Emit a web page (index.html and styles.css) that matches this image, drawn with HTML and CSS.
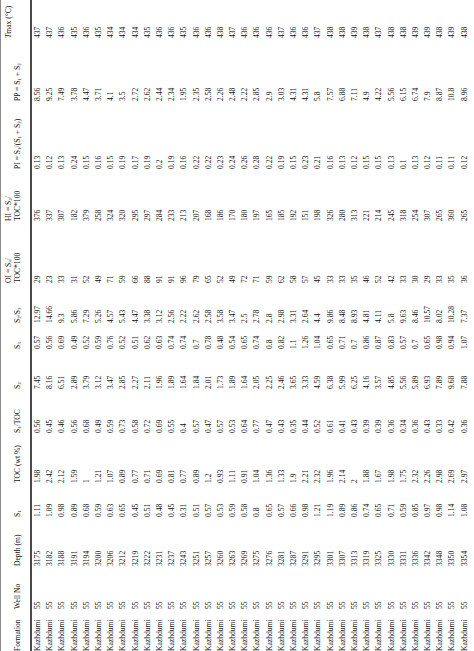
FILE: index.html
```html
<!DOCTYPE html>
<html>
<head>
<meta charset="utf-8">
<link rel="stylesheet" href="styles.css">
</head>
<body>
<div class="page">
<div class="rotator">
<table class="data">
<colgroup>
<col class="c-form"><col class="c-well"><col class="c-depth"><col class="c-s1"><col class="c-toc"><col class="c-s1toc"><col class="c-s2"><col class="c-s3"><col class="c-s2s3"><col class="c-oi"><col class="c-hi"><col class="c-pi"><col class="c-pp"><col class="c-tmax">
</colgroup>
<thead>
<tr>
<th>Formation</th>
<th>Well No</th>
<th>Depth (m)</th>
<th>S<sub>1</sub></th>
<th>TOC (wt %)</th>
<th>S<sub>1</sub>/TOC</th>
<th>S<sub>2</sub></th>
<th>S<sub>3</sub></th>
<th>S<sub>2</sub>/S<sub>3</sub></th>
<th>OI = S<sub>3</sub>/<br>TOC*100</th>
<th>HI = S<sub>2</sub>/<br>TOC*100</th>
<th>PI = S<sub>1</sub>/(S<sub>1</sub> + S<sub>2</sub>)</th>
<th>PP = S<sub>1</sub> + S<sub>2</sub></th>
<th class="top"><i>T</i>max (°C)</th>
</tr>
</thead>
<tbody>
<tr><td>Kazhdumi</td><td>55</td><td>3175</td><td>1.11</td><td>1.98</td><td>0.56</td><td>7.45</td><td>0.57</td><td>12.97</td><td>29</td><td>376</td><td>0.13</td><td>8.56</td><td>437</td></tr>
<tr><td>Kazhdumi</td><td>55</td><td>3182</td><td>1.09</td><td>2.42</td><td>0.45</td><td>8.16</td><td>0.56</td><td>14.66</td><td>23</td><td>337</td><td>0.12</td><td>9.25</td><td>437</td></tr>
<tr><td>Kazhdumi</td><td>55</td><td>3188</td><td>0.98</td><td>2.12</td><td>0.46</td><td>6.51</td><td>0.69</td><td>9.3</td><td>33</td><td>307</td><td>0.13</td><td>7.49</td><td>436</td></tr>
<tr><td>Kazhdumi</td><td>55</td><td>3191</td><td>0.89</td><td>1.59</td><td>0.56</td><td>2.89</td><td>0.49</td><td>5.86</td><td>31</td><td>182</td><td>0.24</td><td>3.78</td><td>435</td></tr>
<tr><td>Kazhdumi</td><td>55</td><td>3194</td><td>0.68</td><td>1</td><td>0.68</td><td>3.79</td><td>0.52</td><td>7.29</td><td>52</td><td>379</td><td>0.15</td><td>4.47</td><td>436</td></tr>
<tr><td>Kazhdumi</td><td>55</td><td>3200</td><td>0.59</td><td>1.21</td><td>0.49</td><td>3.12</td><td>0.59</td><td>5.26</td><td>49</td><td>258</td><td>0.16</td><td>3.71</td><td>435</td></tr>
<tr><td>Kazhdumi</td><td>55</td><td>3206</td><td>0.63</td><td>1.07</td><td>0.59</td><td>3.47</td><td>0.76</td><td>4.57</td><td>71</td><td>324</td><td>0.15</td><td>4.1</td><td>434</td></tr>
<tr><td>Kazhdumi</td><td>55</td><td>3212</td><td>0.65</td><td>0.89</td><td>0.73</td><td>2.85</td><td>0.52</td><td>5.43</td><td>59</td><td>320</td><td>0.19</td><td>3.5</td><td>434</td></tr>
<tr><td>Kazhdumi</td><td>55</td><td>3219</td><td>0.45</td><td>0.77</td><td>0.58</td><td>2.27</td><td>0.51</td><td>4.47</td><td>66</td><td>295</td><td>0.17</td><td>2.72</td><td>434</td></tr>
<tr><td>Kazhdumi</td><td>55</td><td>3222</td><td>0.51</td><td>0.71</td><td>0.72</td><td>2.11</td><td>0.62</td><td>3.38</td><td>88</td><td>297</td><td>0.19</td><td>2.62</td><td>435</td></tr>
<tr><td>Kazhdumi</td><td>55</td><td>3231</td><td>0.48</td><td>0.69</td><td>0.69</td><td>1.96</td><td>0.63</td><td>3.12</td><td>91</td><td>284</td><td>0.2</td><td>2.44</td><td>436</td></tr>
<tr><td>Kazhdumi</td><td>55</td><td>3237</td><td>0.45</td><td>0.81</td><td>0.55</td><td>1.89</td><td>0.74</td><td>2.56</td><td>91</td><td>233</td><td>0.19</td><td>2.34</td><td>436</td></tr>
<tr><td>Kazhdumi</td><td>55</td><td>3243</td><td>0.31</td><td>0.77</td><td>0.4</td><td>1.64</td><td>0.74</td><td>2.22</td><td>96</td><td>213</td><td>0.16</td><td>1.95</td><td>435</td></tr>
<tr><td>Kazhdumi</td><td>55</td><td>3251</td><td>0.51</td><td>0.89</td><td>0.57</td><td>1.84</td><td>0.7</td><td>2.62</td><td>79</td><td>207</td><td>0.22</td><td>2.35</td><td>436</td></tr>
<tr><td>Kazhdumi</td><td>55</td><td>3257</td><td>0.57</td><td>1.2</td><td>0.47</td><td>2.01</td><td>0.78</td><td>2.58</td><td>65</td><td>168</td><td>0.22</td><td>2.58</td><td>436</td></tr>
<tr><td>Kazhdumi</td><td>55</td><td>3260</td><td>0.53</td><td>0.93</td><td>0.57</td><td>1.73</td><td>0.48</td><td>3.58</td><td>52</td><td>186</td><td>0.23</td><td>2.26</td><td>438</td></tr>
<tr><td>Kazhdumi</td><td>55</td><td>3263</td><td>0.59</td><td>1.11</td><td>0.53</td><td>1.89</td><td>0.54</td><td>3.47</td><td>49</td><td>170</td><td>0.24</td><td>2.48</td><td>437</td></tr>
<tr><td>Kazhdumi</td><td>55</td><td>3269</td><td>0.58</td><td>0.91</td><td>0.64</td><td>1.64</td><td>0.65</td><td>2.5</td><td>72</td><td>180</td><td>0.26</td><td>2.22</td><td>436</td></tr>
<tr><td>Kazhdumi</td><td>55</td><td>3275</td><td>0.8</td><td>1.04</td><td>0.77</td><td>2.05</td><td>0.74</td><td>2.78</td><td>71</td><td>197</td><td>0.28</td><td>2.85</td><td>436</td></tr>
<tr><td>Kazhdumi</td><td>55</td><td>3276</td><td>0.65</td><td>1.36</td><td>0.47</td><td>2.25</td><td>0.8</td><td>2.8</td><td>59</td><td>165</td><td>0.22</td><td>2.9</td><td>436</td></tr>
<tr><td>Kazhdumi</td><td>55</td><td>3281</td><td>0.57</td><td>1.33</td><td>0.43</td><td>2.46</td><td>0.82</td><td>2.98</td><td>62</td><td>185</td><td>0.19</td><td>3.03</td><td>437</td></tr>
<tr><td>Kazhdumi</td><td>55</td><td>3287</td><td>0.66</td><td>1.9</td><td>0.35</td><td>3.65</td><td>1.1</td><td>3.31</td><td>58</td><td>192</td><td>0.15</td><td>4.31</td><td>436</td></tr>
<tr><td>Kazhdumi</td><td>55</td><td>3291</td><td>0.98</td><td>2.21</td><td>0.44</td><td>3.33</td><td>1.26</td><td>2.64</td><td>57</td><td>151</td><td>0.23</td><td>4.31</td><td>436</td></tr>
<tr><td>Kazhdumi</td><td>55</td><td>3295</td><td>1.21</td><td>2.32</td><td>0.52</td><td>4.59</td><td>1.04</td><td>4.4</td><td>45</td><td>198</td><td>0.21</td><td>5.8</td><td>437</td></tr>
<tr><td>Kazhdumi</td><td>55</td><td>3301</td><td>1.19</td><td>1.96</td><td>0.61</td><td>6.38</td><td>0.65</td><td>9.86</td><td>33</td><td>326</td><td>0.16</td><td>7.57</td><td>438</td></tr>
<tr><td>Kazhdumi</td><td>55</td><td>3307</td><td>0.89</td><td>2.14</td><td>0.41</td><td>5.99</td><td>0.71</td><td>8.48</td><td>33</td><td>280</td><td>0.13</td><td>6.88</td><td>438</td></tr>
<tr><td>Kazhdumi</td><td>55</td><td>3313</td><td>0.86</td><td>2</td><td>0.43</td><td>6.25</td><td>0.7</td><td>8.93</td><td>35</td><td>313</td><td>0.12</td><td>7.11</td><td>439</td></tr>
<tr><td>Kazhdumi</td><td>55</td><td>3319</td><td>0.74</td><td>1.88</td><td>0.39</td><td>4.16</td><td>0.86</td><td>4.81</td><td>46</td><td>221</td><td>0.15</td><td>4.9</td><td>438</td></tr>
<tr><td>Kazhdumi</td><td>55</td><td>3325</td><td>0.65</td><td>1.67</td><td>0.39</td><td>3.57</td><td>0.87</td><td>4.11</td><td>52</td><td>214</td><td>0.15</td><td>4.22</td><td>437</td></tr>
<tr><td>Kazhdumi</td><td>55</td><td>3330</td><td>0.71</td><td>1.98</td><td>0.36</td><td>4.85</td><td>0.83</td><td>5.8</td><td>42</td><td>245</td><td>0.13</td><td>5.56</td><td>438</td></tr>
<tr><td>Kazhdumi</td><td>55</td><td>3331</td><td>0.59</td><td>1.75</td><td>0.34</td><td>5.56</td><td>0.57</td><td>9.63</td><td>33</td><td>318</td><td>0.1</td><td>6.15</td><td>438</td></tr>
<tr><td>Kazhdumi</td><td>55</td><td>3336</td><td>0.85</td><td>2.32</td><td>0.36</td><td>5.89</td><td>0.7</td><td>8.46</td><td>30</td><td>254</td><td>0.13</td><td>6.74</td><td>439</td></tr>
<tr><td>Kazhdumi</td><td>55</td><td>3342</td><td>0.97</td><td>2.26</td><td>0.43</td><td>6.93</td><td>0.65</td><td>10.57</td><td>29</td><td>307</td><td>0.12</td><td>7.9</td><td>439</td></tr>
<tr><td>Kazhdumi</td><td>55</td><td>3348</td><td>0.98</td><td>2.98</td><td>0.33</td><td>7.89</td><td>0.98</td><td>8.02</td><td>33</td><td>265</td><td>0.11</td><td>8.87</td><td>438</td></tr>
<tr><td>Kazhdumi</td><td>55</td><td>3350</td><td>1.14</td><td>2.69</td><td>0.42</td><td>9.68</td><td>0.94</td><td>10.28</td><td>35</td><td>360</td><td>0.11</td><td>10.8</td><td>439</td></tr>
<tr><td>Kazhdumi</td><td>55</td><td>3354</td><td>1.08</td><td>2.97</td><td>0.36</td><td>7.88</td><td>1.07</td><td>7.37</td><td>36</td><td>265</td><td>0.12</td><td>8.96</td><td>438</td></tr>
</tbody>
</table>
</div>
</div>
</body>
</html>
```

FILE: styles.css
```css
html, body {
  margin: 0;
  padding: 0;
  background: #ffffff;
  overflow: hidden;
}

.page {
  width: 474px;
  height: 651px;
  overflow: hidden;
}

.rotator {
  width: 651px;
  height: 474px;
  transform-origin: 0 0;
  transform: translateY(651px) rotate(-90deg);
}

.data {
  width: 651px;
  table-layout: fixed;
  border-collapse: collapse;
  font-family: "Liberation Serif", "Times New Roman", serif;
  font-size: 7.6px;
  color: #111111;
  border-top: 1px solid #8a8a8a;
}

.c-form { width: 42px; }
.c-well { width: 43px; }
.c-depth { width: 49px; }
.c-s1 { width: 34px; }
.c-toc { width: 50px; }
.c-s1toc { width: 44px; }
.c-s2 { width: 40px; }
.c-s3 { width: 26px; }
.c-s2s3 { width: 40px; }
.c-oi { width: 62px; }
.c-hi { width: 52px; }
.c-pi { width: 68px; }
.c-pp { width: 63px; }
.c-tmax { width: 38px; }

.data th {
  font-weight: normal;
  text-align: left;
  vertical-align: bottom;
  padding: 3px 0 8px 0;
  line-height: 9px;
  height: 18px;
  border-bottom: 2px solid #4a4a4a;
  white-space: nowrap;
}

.data th.top {
  vertical-align: top;
}

.data sub {
  font-size: 5px;
  line-height: 0;
  vertical-align: -1px;
}

.data td {
  padding: 0;
  height: 12.2px;
  line-height: 12px;
  text-align: left;
  vertical-align: middle;
  white-space: nowrap;
}
```
